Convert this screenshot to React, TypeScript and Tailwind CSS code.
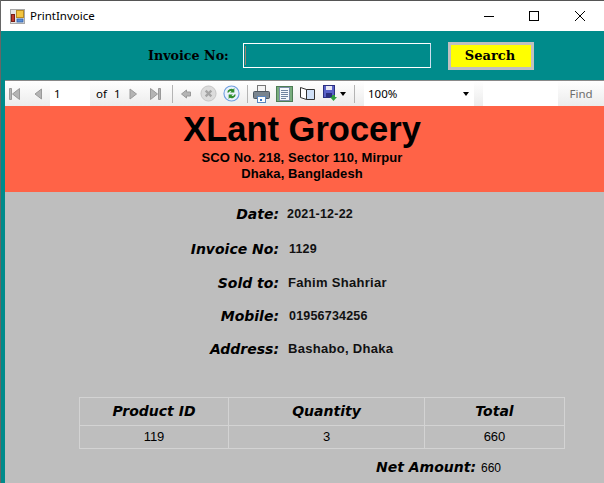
import React from "react";

const sans = "font-['Liberation_Sans',Arial,sans-serif]";
const hand = "font-['DejaVu_Sans',sans-serif] font-bold italic";
const ui = "font-['Noto_Sans',sans-serif]";

function Nav({ d }: { d: string }) {
  return (
    <svg width="14" height="16" viewBox="0 0 14 16" className="shrink-0">
      <path d={d} fill="#b4b4b4" stroke="#999999" strokeWidth="1" />
    </svg>
  );
}

function Sep() {
  return <div className="w-px h-[18px] bg-[#b4b4b4] shrink-0" />;
}

function Row({ label, value, gap, h, size }: { label: string; value: string; gap: string; h: string; size: string }) {
  return (
    <div className={`flex items-center ${h}`}>
      <div className={`${hand} text-[14px] text-black text-right whitespace-nowrap w-[274px]`}>{label}</div>
      <div className={`${sans} ${gap} ${size} font-bold text-[#111]`}>{value}</div>
    </div>
  );
}

export default function App() {
  return (
    <div className="w-[604px] h-[483px] overflow-hidden flex flex-col bg-[#008b8b] border-l border-l-[#666]">
      {/* Title bar */}
      <div className="h-[31px] bg-white flex items-center shrink-0 border-t border-t-[#555]">
        <svg width="15" height="15" viewBox="0 0 15 15" className="ml-[9px] shrink-0">
          <rect x="0.500" y="0.500" width="14" height="14" fill="#e4e4e4" stroke="#a8a8a8" />
          <rect x="6.500" y="1.500" width="7" height="7" fill="#f3c540" stroke="#b98a20" />
          <rect x="1.500" y="5.500" width="3" height="7" fill="#c0392b" stroke="#7a1f18" />
          <rect x="7" y="10" width="6" height="3" fill="#5b8fd8" stroke="#2f5fa8" strokeWidth="0.800" />
        </svg>
        <span className={`ml-[5px] ${ui} text-[11.5px] text-black`}>PrintInvoice</span>
        <div className="ml-auto flex items-center mr-[1px]">
          <div className="w-[44px] flex justify-center">
            <div className="w-[10px] h-px bg-black" />
          </div>
          <div className="w-[46px] flex justify-center">
            <div className="w-[10px] h-[10px] border border-black" />
          </div>
          <div className="w-[46px] flex justify-center">
            <svg width="10" height="10" viewBox="0 0 10 10">
              <path d="M0 0L10 10M10 0L0 10" stroke="#000" strokeWidth="1" />
            </svg>
          </div>
        </div>
      </div>

      {/* Search strip */}
      <div className="h-[49px] shrink-0 flex items-center bg-[#008b8b]">
        <span className="ml-[147px] font-['DejaVu_Serif',serif] font-bold text-[12.7px] text-black whitespace-nowrap w-[95px]">Invoice No:</span>
        <div className="w-[188px] h-[25px] border border-white border-r-[#cde] shrink-0 flex items-center pl-[1px]">
          <div className="w-px h-[19px] bg-[#a08070]" />
        </div>
        <button className="ml-[17px] w-[86px] h-[28px] border-[3px] border-[#c0c0c0] bg-[#ffff00] font-['DejaVu_Serif',serif] font-bold text-[13px] text-black pr-[2px]">
          Search
        </button>
      </div>

      {/* Report viewer */}
      <div className="ml-[4px] flex-1 flex flex-col min-h-0">
        <div className="h-[26px] shrink-0 border-t border-t-[#8a8a8a] bg-gradient-to-b from-white to-[#ececec] flex items-center pl-[3px]">
          <Nav d="M1.500 2.500h2v11h-2zM11.500 2.500v11L4.500 8z" />
          <div className="w-[9px]" />
          <Nav d="M10.500 3v10L4 8z" />
          <div className={`ml-[5px] w-[40px] h-[25px] bg-white flex items-center pl-[4px] text-[11.5px] text-black shrink-0 ${ui}`}>1</div>
          <span className={`ml-[6px] text-[11.5px] text-black ${ui}`}>of</span>
          <span className={`ml-[7px] text-[11.5px] text-black ${ui}`}>1</span>
          <div className="w-[6px]" />
          <Nav d="M4 3v10l6.500-5z" />
          <div className="w-[8px]" />
          <Nav d="M2.500 2.500v11L9.500 8zM10.500 2.500h2v11h-2z" />
          <div className="w-[10px]" />
          <Sep />
          <div className="w-[6px]" />
          <Nav d="M2.500 8l5-4v2h4v4h-4v2z" />
          <div className="w-[7px]" />
          <svg width="17" height="17" viewBox="0 0 18 18" className="shrink-0">
            <circle cx="9" cy="9" r="8" fill="#dcdcdc" stroke="#c4c4c4" />
            <path d="M6 6l6 6M12 6l-6 6" stroke="#a4a4a4" strokeWidth="2.400" />
          </svg>
          <div className="w-[6px]" />
          <svg width="17" height="17" viewBox="0 0 18 18" className="shrink-0">
            <circle cx="9" cy="9" r="8" fill="#eaf2fd" stroke="#6f9fe0" strokeWidth="1.200" />
            <path d="M4.500 8a4.500 4.500 0 0 1 6.500-3.500L12 3v5H7.500l1.500-1.500a2.500 2.500 0 0 0-3 1.500z" fill="#2f8f2f" />
            <path d="M13.500 10a4.500 4.500 0 0 1-6.500 3.500L6 15v-5h4.500L9 11.500a2.500 2.500 0 0 0 3-1.500z" fill="#2f8f2f" />
          </svg>
          <div className="w-[7px]" />
          <Sep />
          <div className="w-[5px]" />
          <svg width="17" height="18" viewBox="0 0 17 18" className="shrink-0">
            <rect x="4.500" y="0.500" width="8" height="6" fill="#f4f4f4" stroke="#777" />
            <rect x="0.500" y="6.500" width="16" height="7" rx="1" fill="#79848e" stroke="#4d5760" />
            <rect x="4.500" y="11.500" width="8" height="6" fill="#fff" stroke="#5a86c0" />
            <rect x="7" y="14" width="2" height="2" fill="#3f78c4" />
          </svg>
          <div className="w-[6px]" />
          <svg width="17" height="16" viewBox="0 0 17 16" className="shrink-0">
            <rect x="0.500" y="0.500" width="16" height="15" fill="#78ad7e" stroke="#4d7d55" />
            <rect x="3.500" y="1.500" width="10" height="13" fill="#f4f8fc" stroke="#7a8fa9" />
            <path d="M5 4.500h7M5 6.500h7M5 8.500h7M5 10.500h7M5 12.500h5" stroke="#6f84a0" />
          </svg>
          <div className="w-[6px]" />
          <svg width="17" height="15" viewBox="0 0 17 15" className="shrink-0">
            <path d="M1.500 1.500l6 2v10l-6-2z" fill="#fff" stroke="#333" />
            <path d="M7.500 3.500h8v10h-8z" fill="#cfe0f7" stroke="#333" />
          </svg>
          <div className="w-[7px]" />
          <svg width="15" height="17" viewBox="0 0 15 17" className="shrink-0">
            <rect x="0.500" y="0.500" width="11" height="12" fill="#5a62c8" stroke="#2b2f80" />
            <rect x="3" y="1" width="6" height="4" fill="#e8e8f4" />
            <rect x="3" y="8" width="6" height="5" fill="#2b2f80" />
            <path d="M9 10h3v2h2l-3.500 4L7 12h2z" fill="#2f9e3f" />
          </svg>
          <svg width="6" height="4" viewBox="0 0 6 4" className="ml-[2px] shrink-0">
            <path d="M0 0h6L3 4z" fill="#000" />
          </svg>
          <div className="w-[8px]" />
          <Sep />
          <div className={`ml-[9px] w-[110px] h-[25px] bg-white flex items-center justify-between pl-[4px] pr-[5px] text-[11.5px] text-black shrink-0 ${ui}`}>
            <span>100%</span>
            <svg width="6" height="4" viewBox="0 0 6 4"><path d="M0 0h6L3 4z" fill="#000" /></svg>
          </div>
          <div className="ml-[9px] w-[75px] h-[25px] bg-white shrink-0" />
          <div className={`w-[46px] text-center text-[11.5px] text-[#6d6d6d] shrink-0 ${ui}`}>Find</div>
        </div>

        <div className="h-[86px] shrink-0 bg-[#ff6347] flex flex-col items-center text-black pr-[5px]">
          <div className={`${sans} font-bold text-[34.5px] leading-[40px] mt-[3px]`}>XLant Grocery</div>
          <div className={`${sans} font-bold text-[13px] tracking-[0.1px] leading-[16px] mt-[1px]`}>SCO No. 218, Sector 110, Mirpur</div>
          <div className={`${sans} font-bold text-[13px] tracking-[0.1px] leading-[16px]`}>Dhaka, Bangladesh</div>
        </div>

        <div className="flex-1 bg-[#bebebe] pt-[5px]">
          <Row label="Date:" value="2021-12-22" gap="ml-[8px]" h="h-[34px]" size="text-[12.5px] tracking-[0.2px]" />
          <Row label="Invoice No:" value="1129" gap="ml-[10px]" h="h-[36px]" size="text-[12.5px] tracking-[0.2px]" />
          <Row label="Sold to:" value="Fahim Shahriar" gap="ml-[9px]" h="h-[32px]" size="text-[13px] tracking-[0.3px]" />
          <Row label="Mobile:" value="01956734256" gap="ml-[10px]" h="h-[34px]" size="text-[12.5px] tracking-[0.2px]" />
          <Row label="Address:" value="Bashabo, Dhaka" gap="ml-[9px]" h="h-[32px]" size="text-[13px] tracking-[0.3px]" />

          <table className="ml-[74px] mt-[32px] w-[486px] table-fixed border-collapse border border-[#d3d3d3]">
            <thead>
              <tr className="h-[28px]">
                <th className={`${hand} w-[149px] text-[14px] border border-[#d3d3d3] text-black`}>Product ID</th>
                <th className={`${hand} w-[196px] text-[14px] border border-[#d3d3d3] text-black`}>Quantity</th>
                <th className={`${hand} text-[14px] border border-[#d3d3d3] text-black`}>Total</th>
              </tr>
            </thead>
            <tbody>
              <tr className="h-[23px]">
                <td className={`${sans} text-[13px] text-center border border-[#d3d3d3] text-black`}>119</td>
                <td className={`${sans} text-[13px] text-center border border-[#d3d3d3] text-black`}>3</td>
                <td className={`${sans} text-[13px] text-center border border-[#d3d3d3] text-black`}>660</td>
              </tr>
            </tbody>
          </table>

          <div className="flex items-center mt-[8px]">
            <div className={`${hand} text-[14px] text-black text-right whitespace-nowrap w-[471px]`}>Net Amount:</div>
            <div className={`${sans} ml-[5px] text-[12px] text-black`}>660</div>
          </div>
        </div>
      </div>
    </div>
  );
}
